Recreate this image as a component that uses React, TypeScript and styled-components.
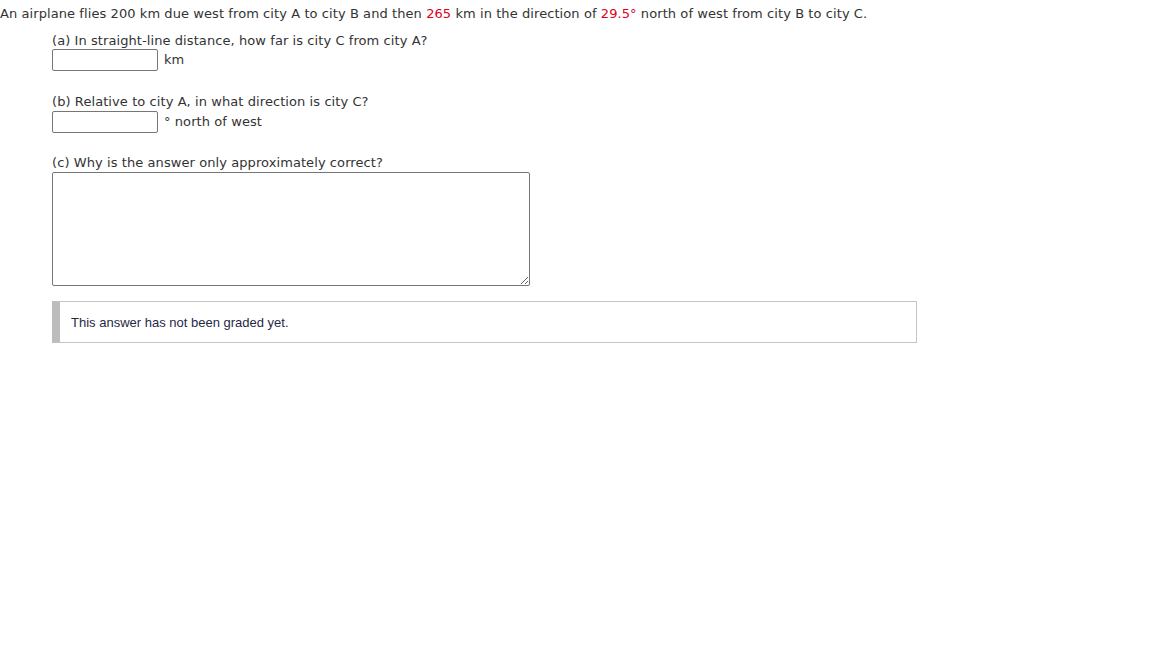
import React from "react";
import styled, { createGlobalStyle } from "styled-components";

const Global = createGlobalStyle`
  html, body { margin: 0; padding: 0; background: #fff; }
  body { font-family: Verdana, "DejaVu Sans", sans-serif; font-size: 13px; color: #333; letter-spacing: 0.08px; }
`;

const Page = styled.div`
  display: flex;
  flex-direction: column;
`;

const Statement = styled.div`
  padding-top: 6px;
  line-height: 16px;
  white-space: nowrap;
`;

const Red = styled.span`
  color: #e0001b;
`;

const Parts = styled.div`
  display: flex;
  flex-direction: column;
  padding-left: 52px;
  padding-top: 11px;
`;

const Part = styled.div<{ $gap?: number }>`
  display: flex;
  flex-direction: column;
  margin-bottom: ${(p) => p.$gap ?? 0}px;
`;

const Question = styled.div<{ $space?: number }>`
  line-height: 16px;
  margin-bottom: ${(p) => p.$space ?? 0}px;
`;

const AnswerRow = styled.div`
  display: flex;
  align-items: center;
  gap: 6px;
`;

const Input = styled.input`
  box-sizing: border-box;
  width: 106px;
  height: 22px;
  margin: 0;
  border: 1px solid #767676;
  border-radius: 2px;
  background: #fff;
  padding: 0 4px;
`;

const Unit = styled.span`
  line-height: 16px;
`;

const TextArea = styled.textarea`
  box-sizing: border-box;
  width: 478px;
  height: 114px;
  margin: 1px 0 0;
  border: 1px solid #767676;
  border-radius: 2px;
  resize: both;
`;

const Graded = styled.div`
  box-sizing: border-box;
  width: 865px;
  height: 42px;
  margin-top: 15px;
  border: 1px solid #c4c4c4;
  border-left: 8px solid #bdbdbd;
  display: flex;
  align-items: center;
  padding-left: 11px;
  font-family: Arial, "Liberation Sans", sans-serif;
  font-size: 13px;
  letter-spacing: 0;
  color: #1f2a44;
`;

export default function App() {
  return (
    <Page>
      <Global />
      <Statement>
        An airplane flies 200 km due west from city A to city B and then <Red>265</Red> km in the direction of{" "}
        <Red>29.5°</Red> north of west from city B to city C.
      </Statement>
      <Parts>
        <Part $gap={23}>
          <Question>(a) In straight-line distance, how far is city C from city A?</Question>
          <AnswerRow>
            <Input type="text" />
            <Unit>km</Unit>
          </AnswerRow>
        </Part>
        <Part $gap={22}>
          <Question $space={1}>(b) Relative to city A, in what direction is city C?</Question>
          <AnswerRow>
            <Input type="text" />
            <Unit>° north of west</Unit>
          </AnswerRow>
        </Part>
        <Part>
          <Question>(c) Why is the answer only approximately correct?</Question>
          <TextArea />
        </Part>
        <Graded>This answer has not been graded yet.</Graded>
      </Parts>
    </Page>
  );
}
